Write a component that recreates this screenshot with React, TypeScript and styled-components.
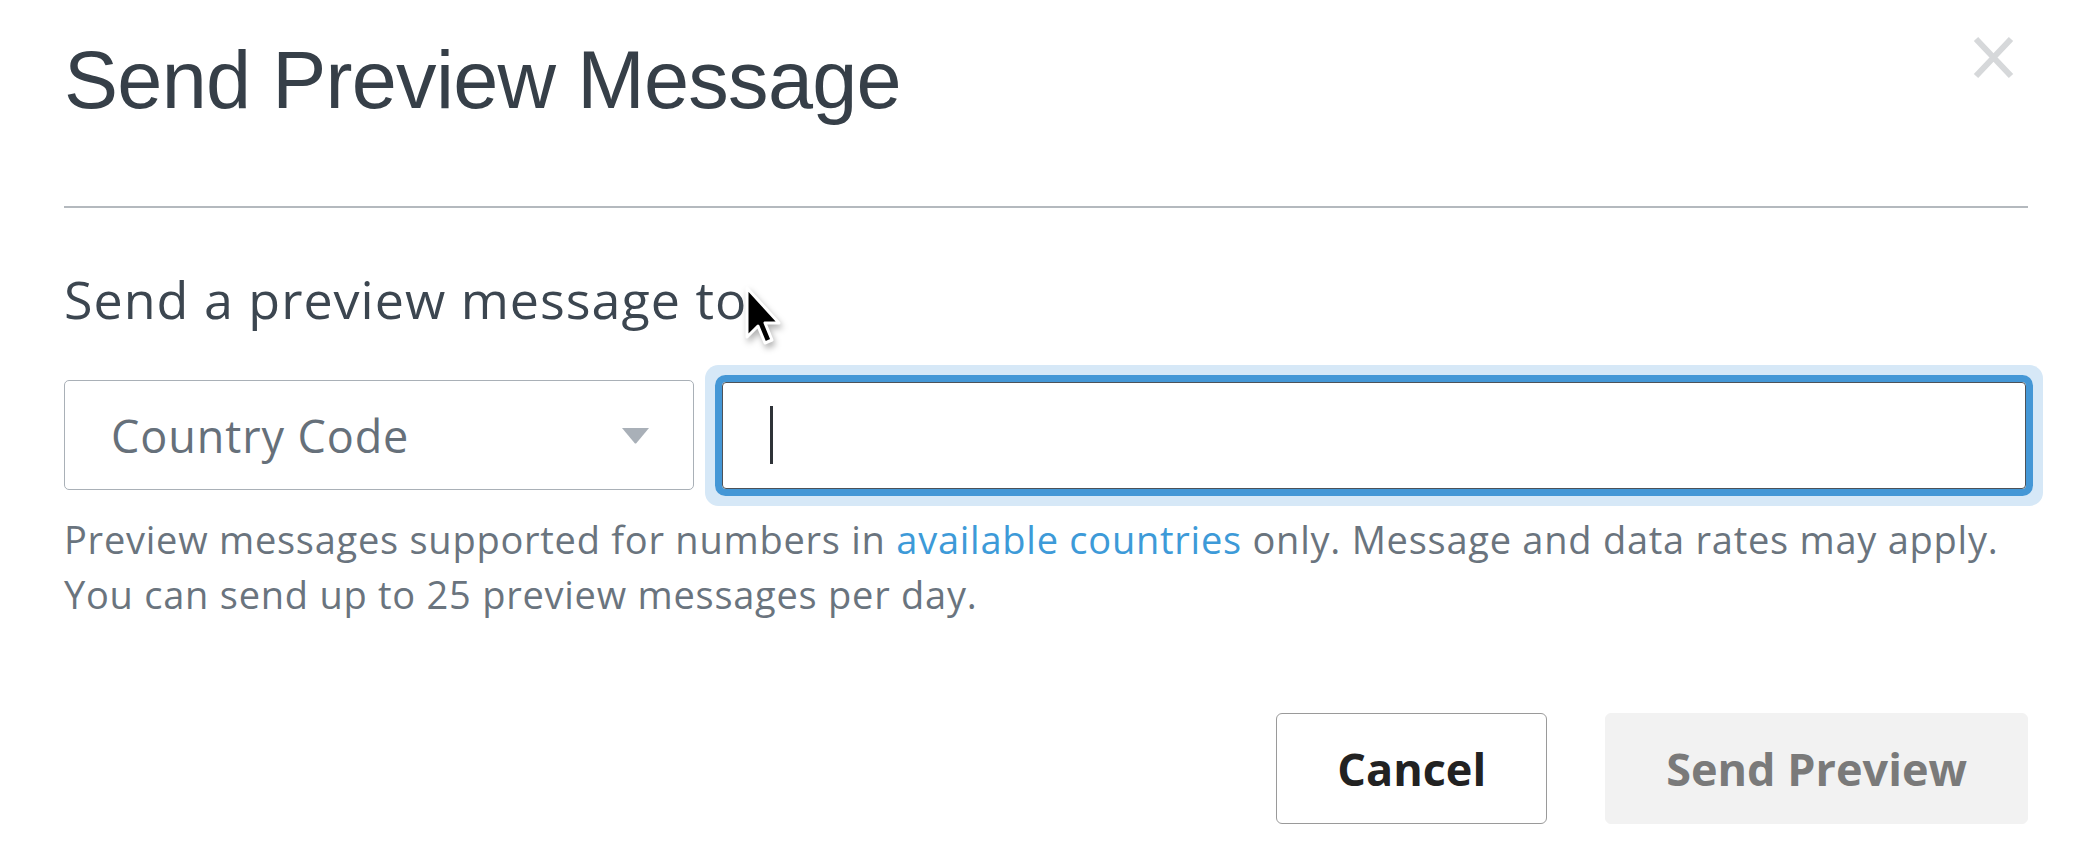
import React from "react";
import styled, { createGlobalStyle } from "styled-components";

const GlobalStyle = createGlobalStyle`
  html, body {
    margin: 0;
    padding: 0;
    background: #ffffff;
  }
  body {
    font-family: "Open Sans", Lato, sans-serif;
  }
`;

const Dialog = styled.div`
  position: relative;
  width: 2074px;
  height: 850px;
  box-sizing: border-box;
  padding: 0 46px 0 64px;
  background: #ffffff;
  overflow: hidden;
`;

const Header = styled.header`
  display: flex;
  justify-content: space-between;
  align-items: flex-start;
  padding-top: 40px;
  height: 166px;
  border-bottom: 2px solid #b4b9be;
`;

const Title = styled.h1`
  margin: 0;
  font-family: "Liberation Sans", Arial, sans-serif;
  font-weight: 400;
  font-size: 81px;
  line-height: 81px;
  letter-spacing: -0.7px;
  color: #363f48;
`;

const CloseButton = styled.button`
  margin: -5px 13px 0 0;
  padding: 0;
  border: 0;
  background: transparent;
  width: 43px;
  height: 45px;
  display: flex;
  cursor: pointer;
`;

const Label = styled.div`
  margin-top: 61px;
  font-size: 52px;
  line-height: 60px;
  letter-spacing: 1px;
  color: #3c4650;
`;

const FieldRow = styled.div`
  display: grid;
  grid-template-columns: 630px 1fr;
  gap: 28px;
  margin-top: 51px;
  margin-right: 2px;
  align-items: center;
`;

const Select = styled.div`
  box-sizing: border-box;
  height: 110px;
  border: 1.5px solid #a9b0b7;
  border-radius: 5px;
  display: flex;
  align-items: center;
  justify-content: space-between;
  padding: 0 43px 0 46px;
  font-size: 45px;
  letter-spacing: 0.9px;
  color: #66707a;
`;

const Phone = styled.div`
  box-sizing: border-box;
  height: 107px;
  border: 1.5px solid #4d5258;
  border-radius: 4px;
  display: flex;
  align-items: center;
  padding-left: 47px;
  box-shadow: 0 0 0 7px #4497d6, 0 0 0 17px #d6e8f7;
`;

const Caret = styled.span`
  display: block;
  width: 3px;
  height: 58px;
  background: #2f3338;
`;

const Help = styled.p`
  margin: 22px 0 0;
  font-size: 38px;
  line-height: 55px;
  letter-spacing: 0.75px;
  color: #6a747e;
`;

const Link = styled.a`
  color: #3d9ad8;
  text-decoration: none;
`;

const Footer = styled.div`
  display: flex;
  justify-content: flex-end;
  gap: 58px;
  margin-top: 91px;
`;

const Button = styled.button<{ $primary?: boolean }>`
  box-sizing: border-box;
  height: 111px;
  padding: 0 60px;
  border-radius: 6px;
  font-family: "Open Sans", Lato, sans-serif;
  font-weight: 700;
  font-size: 45px;
  letter-spacing: 0;
  display: flex;
  align-items: center;
  cursor: pointer;
  border: ${(p) => (p.$primary ? "1.5px solid #f2f2f2" : "1.5px solid #9a9a9a")};
  background: ${(p) => (p.$primary ? "#f2f2f2" : "#ffffff")};
  color: ${(p) => (p.$primary ? "#7a7a7a" : "#222222")};
`;

const Pointer = styled.svg`
  position: absolute;
  left: 744px;
  top: 285px;
  filter: drop-shadow(2px 4px 3px rgba(0, 0, 0, 0.3));
`;

export default function App() {
  return (
    <>
      <GlobalStyle />
      <Dialog>
        <Header>
          <Title>Send Preview Message</Title>
          <CloseButton aria-label="Close">
            <svg width="43" height="45" viewBox="0 0 43 45">
              <path
                d="M4 4 L39 41 M39 4 L4 41"
                stroke="#d6d8da"
                strokeWidth="6"
                strokeLinecap="butt"
              />
            </svg>
          </CloseButton>
        </Header>
        <Label>Send a preview message to</Label>
        <FieldRow>
          <Select>
            <span>Country Code</span>
            <svg width="29" height="17" viewBox="0 0 29 17">
              <path d="M1 1 H28 L15.5 16 Q14.5 17 13.5 16 Z" fill="#a9b0b8" />
            </svg>
          </Select>
          <Phone>
            <Caret />
          </Phone>
        </FieldRow>
        <Help>
          Preview messages supported for numbers in{" "}
          <Link href="#">available countries</Link> only. Message and data rates may apply.
          <br />
          You can send up to 25 preview messages per day.
        </Help>
        <Footer>
          <Button>Cancel</Button>
          <Button $primary>Send Preview</Button>
        </Footer>
        <Pointer width="44" height="64" viewBox="0 0 44 64">
          <path
            d="M3 3 L3 52 L14 41 L21 58 L28 55 L21 38 L35 38 Z"
            fill="#000000"
            stroke="#ffffff"
            strokeWidth="3"
            strokeLinejoin="round"
          />
        </Pointer>
      </Dialog>
    </>
  );
}
